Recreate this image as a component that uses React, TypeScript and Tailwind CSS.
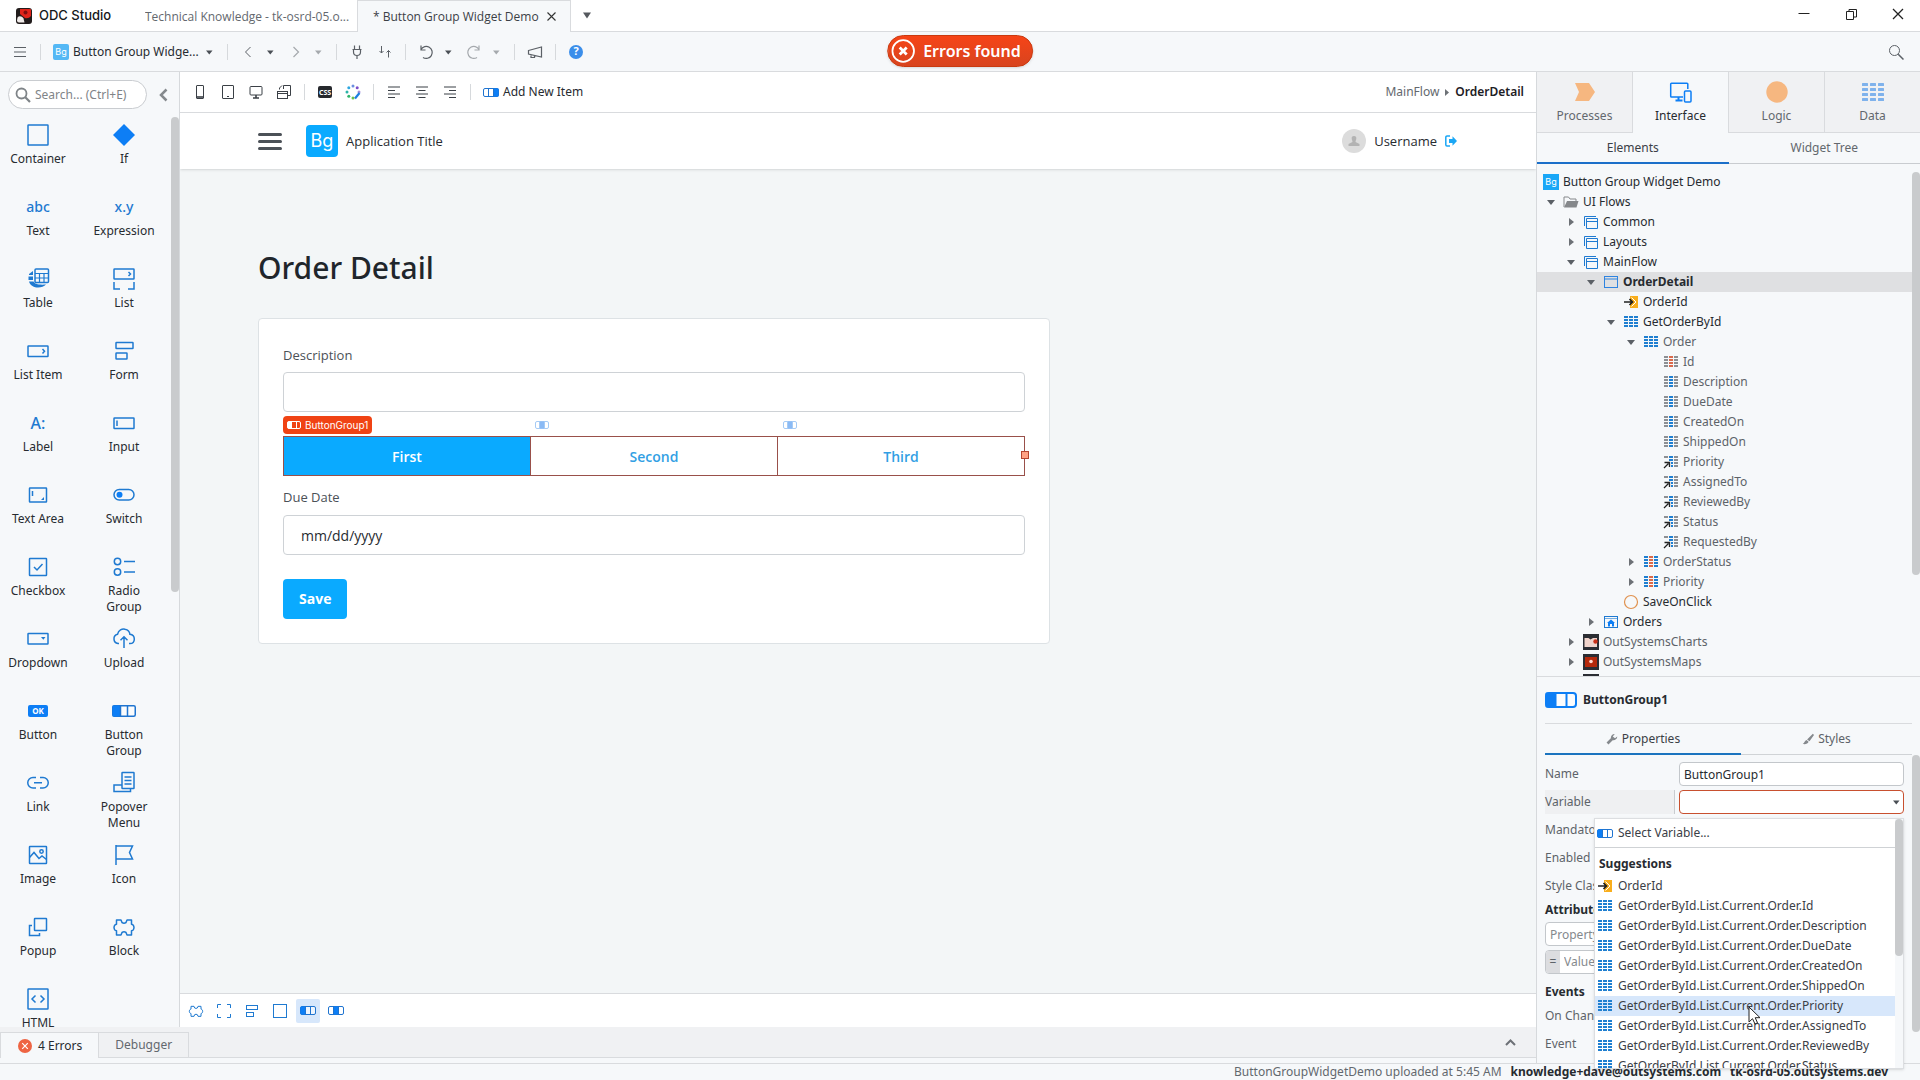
import React from "react";

const BLUE = "#1f7ad1";
const SOLID = "#0d7ef5";

function Svg({ size = 16, children, ...rest }: any) {
  return (
    <svg width={size} height={size} viewBox={`0 0 ${size} ${size}`} fill="none" stroke="currentColor" aria-hidden="true" className="shrink-0" {...rest}>
      {children}
    </svg>
  );
}

function Caret({ dim = false }: { dim?: boolean }) {
  return (
    <svg width="12" height="8" viewBox="0 0 12 8" aria-hidden="true" className={dim ? "text-[#a5a9ad]" : "text-[#4a4f55]"}>
      <path d="M3 2.500h6.500L6.250 6.500z" fill="currentColor" />
    </svg>
  );
}

function GroupIcon({ w = 16, h = 9, on = 0, outline = "#1f74d0", fill = SOLID }: { w?: number; h?: number; on?: number; outline?: string; fill?: string }) {
  const sw = h > 14 ? 2 : h > 10 ? 1.5 : 1;
  const a = Math.floor(w / 3) + 0.5;
  const b = w - Math.floor(w / 3) - 0.5;
  const edges = [0.5, a, b, w - 0.5];
  return (
    <svg width={w} height={h} viewBox={`0 0 ${w} ${h}`} fill="none" aria-hidden="true" className="shrink-0">
      <rect x={sw / 2} y={sw / 2} width={w - sw} height={h - sw} rx={h > 14 ? 3 : 1.5} fill="#fff" fillOpacity={outline === "#fff" ? 0 : 0.6} stroke={outline} strokeWidth={sw} />
      <rect x={edges[on]} y="0.5" width={edges[on + 1] - edges[on]} height={h - 1} rx={on === 0 ? 1 : 0} fill={fill} />
      <path d={`M${a} 0V${h}M${b} 0V${h}`} stroke={outline} strokeWidth={sw} />
    </svg>
  );
}

function GridIcon({ side = "#1f7fd0", mid = "#1f7fd0", link = false }: { side?: string; mid?: string; link?: boolean }) {
  const rows = [2, 5, 8, 11];
  return (
    <svg width="16" height="16" viewBox="0 0 16 16" aria-hidden="true" className="shrink-0">
      {rows.map((y, i) => (
        <g key={y}>
          {!(link && i > 0) && <rect x="1" y={y} width="4" height="2" fill={side} />}
          <rect x={link && i > 1 ? 8 : 6} y={y} width={link && i > 1 ? 2 : 4} height="2" fill={mid} />
          <rect x="11" y={y} width="4" height="2" fill={side} />
        </g>
      ))}
      {link && <path d="M1 14L5.500 9.500M1.500 8.500h5v4.500" fill="none" stroke="#222" strokeWidth="1.300" />}
    </svg>
  );
}

function EntryIcon() {
  return (
    <svg width="16" height="16" viewBox="0 0 16 16" aria-hidden="true" className="shrink-0">
      <rect x="7" y="2" width="8" height="12" fill="#f9ae1c" />
      <path d="M8.500 3.500L13 8L8.500 12.500" fill="none" stroke="#fff" strokeWidth="1" />
      <path d="M1 8h8M6.500 5L9.500 8L6.500 11" fill="none" stroke="#222" strokeWidth="1.700" />
    </svg>
  );
}

function BlockShape({ size = 24 }: { size?: number }) {
  return (
    <svg width={size} height={size} viewBox="0 0 24 24" fill="none" stroke="currentColor" strokeWidth="1.500" strokeLinejoin="round" aria-hidden="true">
      <path d="M4.500 5H9L10 7.500Q12 8.800 14 7.500L15 5H19.500V9.200C20 9.200 22 9.800 22 12.500S20 15.800 19.500 15.800V20H15L14 17.500Q12 16.200 10 17.500L9 20H4.500V15.800C4 15.800 2 15.200 2 12.500S4 9.200 4.500 9.200Z" />
    </svg>
  );
}

const S = (p: any) => <Svg size={24} strokeWidth="1.5" {...p} />;

const palette: { label: string; icon: React.ReactNode }[] = [
  { label: "Container", icon: <S><rect x="2" y="2" width="20" height="20" rx="0.500" /></S> },
  { label: "If", icon: <S><path d="M12 1L23 12L12 23L1 12Z" fill={SOLID} stroke="none" /></S> },
  { label: "Text", icon: <span className="text-sm font-medium">abc</span> },
  { label: "Expression", icon: <span className="text-sm font-medium">x.y</span> },
  {
    label: "Table",
    icon: (
      <S>
        <rect x="9" y="2" width="13.500" height="13.500" rx="1" />
        <path d="M9 6.500h13.500M9 11h13.500M13.500 6.500v9M18 6.500v9" strokeWidth="1.200" />
        <path d="M3 7l4-3v4H3zM2.500 9.500H7V13H2.500zM3 14.500h4.500C9 17 12 18 20 17.500C16 22 5 22 3 14.500z" fill="currentColor" stroke="none" />
      </S>
    ),
  },
  { label: "List", icon: <S><rect x="2" y="2" width="20" height="10" rx="0.500" /><path d="M16.500 5l2 2l-2 2M2 15v7h6M22 15v7h-6" /></S> },
  { label: "List Item", icon: <S><rect x="2" y="7" width="20" height="10.500" rx="0.500" /><path d="M16.500 10l2 2.200l-2 2.200" /></S> },
  { label: "Form", icon: <S><rect x="4" y="3.500" width="17" height="6" rx="0.500" /><rect x="4" y="14" width="11" height="6" rx="0.500" /></S> },
  { label: "Label", icon: <span className="text-base font-medium">A:</span> },
  { label: "Input", icon: <S><rect x="2" y="7" width="20" height="10.500" rx="0.500" /><path d="M5 9.500v5.500" /></S> },
  { label: "Text Area", icon: <S><rect x="3.500" y="5" width="17" height="14" rx="0.500" /><path d="M6.500 8v5" /><path d="M18 14v3h-3z" fill="currentColor" stroke="none" /></S> },
  { label: "Switch", icon: <S><rect x="2" y="6.500" width="20" height="10.500" rx="5.250" /><circle cx="7.500" cy="11.800" r="3" fill={SOLID} stroke="none" /></S> },
  { label: "Checkbox", icon: <S><rect x="3.500" y="3.500" width="17" height="17" rx="0.500" /><path d="M8 12l3 3l5.500-6" /></S> },
  { label: "Radio Group", icon: <S><circle cx="5.500" cy="6.500" r="3.200" /><circle cx="5.500" cy="17" r="3.200" /><path d="M12 6.500h11M12 17h11" /></S> },
  { label: "Dropdown", icon: <S><rect x="2" y="6.500" width="20" height="10.500" rx="0.500" /><path d="M15 10h4.500l-2.200 2.800z" fill="currentColor" stroke="none" /></S> },
  { label: "Upload", icon: <S><path d="M7 16.500H6A4.700 4.700 0 0 1 5.500 7.300C6.500 3 10 1.500 13 2.200C16 2.800 17.700 5 17.900 7.300C24 8 23.500 16.500 18 16.500H17M12 21V10M8.500 13.200L12 9.700l3.500 3.500" /></S> },
  {
    label: "Button",
    icon: <span className="rounded-xs bg-[#0d7ef5] px-1 text-[8px] leading-3 font-bold text-white">OK</span>,
  },
  { label: "Button Group", icon: <GroupIcon w={24} h={12} /> },
  { label: "Link", icon: <S><path d="M10 6.500H7A5.200 5.200 0 0 0 7 17h3M14 6.500h3A5.200 5.200 0 0 1 17 17h-3M8 11.800h8" /></S> },
  { label: "Popover Menu", icon: <S><rect x="10" y="1.500" width="12" height="16" rx="0.500" /><path d="M12.500 6h7M12.500 9.500h7M12.500 13h7M10 14H2v6.500h16.500v-3" /></S> },
  { label: "Image", icon: <S><rect x="3.500" y="3.500" width="17" height="17" rx="0.500" /><circle cx="15.500" cy="8.500" r="1.700" /><path d="M3.500 14.500L8 9.500l5 6l3-2.500l4.500 3.500" /></S> },
  { label: "Icon", icon: <S><path d="M4 22V2M4 3h16.500l-3 6.500l3 6.500H4" /></S> },
  { label: "Popup", icon: <S><rect x="8.500" y="3.500" width="12" height="12" rx="0.500" /><path d="M6 10.500H3.500V20.500H13.500V18" /></S> },
  { label: "Block", icon: <BlockShape /> },
  { label: "HTML", icon: <S><rect x="2" y="2" width="20" height="20" rx="0.500" /><path d="M9.500 8.500L6 12l3.500 3.500M14.500 8.500L18 12l-3.500 3.500" /></S> },
];

function FlowIcon() {
  return (
    <Svg style={{ color: BLUE }}>
      <path d="M1.500 12V2.500H13" />
      <path d="M3.500 4.500h11v10h-11zM3.500 7.500h11" />
    </Svg>
  );
}
const screenIcon = <Svg style={{ color: "#2f84e0" }}><rect x="1.500" y="2.500" width="13" height="11" /><path d="M1.500 5h13" /></Svg>;
const homeIcon = <Svg style={{ color: BLUE }}><rect x="1.500" y="2.500" width="13" height="11" /><path d="M1.500 4.500h13" strokeWidth="0.600" /><path d="M8 5.500L12 9h-1v3.500H9V10H7v2.500H5V9H4z" fill={SOLID} stroke="none" /></Svg>;
const folderIcon = <Svg><path d="M1 13V3h4.500l1.500 2h6v2" stroke="#85888b" /><path d="M1 13.500L4 7h11.500L13.500 13.500z" fill="#85888b" stroke="none" /></Svg>;
const chartsIcon = <Svg stroke="none"><rect width="16" height="16" fill="#2b2d33" /><path d="M1.500 4h4l2 1.500L10 4h4v9H1.500z" fill="#f0d3cb" /><circle cx="12.500" cy="7.500" r="2.200" fill="#c92f18" /></Svg>;
const mapsIcon = <Svg stroke="none"><rect width="16" height="16" fill="#2b2d33" /><rect x="2" y="3" width="12" height="10" fill="#b5290c" /><circle cx="8" cy="7.500" r="1.800" fill="#ffd9cf" /></Svg>;
const GRAY = "#8c8f93";
const RED = "#d9694b";

type Node = { d: number; t: string; a?: "open" | "shut"; icon: React.ReactNode; soft?: boolean; sel?: boolean };
const attr = (t: string): Node => ({ d: 6, t, icon: <GridIcon side={GRAY} />, soft: true });
const ref = (t: string): Node => ({ d: 6, t, icon: <GridIcon side={GRAY} link />, soft: true });
const tree: Node[] = [
  { d: 1, t: "UI Flows", a: "open", icon: folderIcon },
  { d: 2, t: "Common", a: "shut", icon: <FlowIcon /> },
  { d: 2, t: "Layouts", a: "shut", icon: <FlowIcon /> },
  { d: 2, t: "MainFlow", a: "open", icon: <FlowIcon /> },
  { d: 3, t: "OrderDetail", a: "open", icon: screenIcon, sel: true },
  { d: 4, t: "OrderId", icon: <EntryIcon /> },
  { d: 4, t: "GetOrderById", a: "open", icon: <GridIcon /> },
  { d: 5, t: "Order", a: "open", icon: <GridIcon />, soft: true },
  { d: 6, t: "Id", icon: <GridIcon side={GRAY} mid={RED} />, soft: true },
  attr("Description"),
  attr("DueDate"),
  attr("CreatedOn"),
  attr("ShippedOn"),
  ref("Priority"),
  ref("AssignedTo"),
  ref("ReviewedBy"),
  ref("Status"),
  ref("RequestedBy"),
  { d: 5, t: "OrderStatus", a: "shut", icon: <GridIcon mid={RED} />, soft: true },
  { d: 5, t: "Priority", a: "shut", icon: <GridIcon mid={RED} />, soft: true },
  { d: 4, t: "SaveOnClick", icon: <Svg><circle cx="8" cy="8" r="6.500" stroke="#e0924f" strokeWidth="1.200" /></Svg> },
  { d: 3, t: "Orders", a: "shut", icon: homeIcon },
  { d: 2, t: "OutSystemsCharts", a: "shut", icon: chartsIcon, soft: true },
  { d: 2, t: "OutSystemsMaps", a: "shut", icon: mapsIcon, soft: true },
];

function Sep() {
  return <span className="h-4 w-px bg-[#d6d9dc]" />;
}

function Tool({ label, children, className = "" }: { label: string; children: React.ReactNode; className?: string }) {
  return (
    <button type="button" aria-label={label} className={"flex h-4 w-4 items-center justify-center " + className}>
      {children}
    </button>
  );
}
function CaretButton({ label, dim }: { label: string; dim?: boolean }) {
  return <button type="button" aria-label={label} className="-ml-1 flex h-4 w-3 items-center justify-center"><Caret dim={dim} /></button>;
}

function TitleBar() {
  return (
    <header className="flex h-8 items-stretch border-b border-[#d9dbde] bg-white font-['Open_Sans',sans-serif]">
      <div className="flex items-center gap-[7px] pl-4">
        <svg width="16" height="16" viewBox="0 0 16 16" aria-hidden="true">
          <rect width="16" height="16" rx="3" fill="#221c1c" />
          <path d="M4 1h10a1 1 0 0 1 1 1v6a6 6 0 0 1-6 2L4 6z" fill="#e0241b" />
          <circle cx="9.500" cy="4.500" r="2" fill="#7d0f0f" />
          <path d="M1.500 9.500C3 7.500 6 8 7.500 10.500L8.500 14.500H3a2 2 0 0 1-2-2z" fill="#f1ecea" />
        </svg>
        <span className="w-[106px] font-[Inter] text-[13px] font-medium text-[#15171a]">ODC Studio</span>
      </div>
      <button type="button" className="w-[212px] truncate pt-0.5 text-left text-[#63686e]">Technical Knowledge - tk-osrd-05.o...</button>
      <div className="-mb-px flex items-center gap-2 border-x border-t border-[#d9dbde] bg-[#f6f8fa] pr-3.5 pl-[15px] text-[#3b4046]">
        <button type="button">* Button Group Widget Demo</button>
        <button type="button" aria-label="Close tab">
          <svg width="9" height="9" viewBox="0 0 9 9" stroke="#333" strokeWidth="1.100"><path d="M.5.500l8 8M8.500.500l-8 8" /></svg>
        </button>
      </div>
      <button type="button" aria-label="More tabs" className="px-3">
        <svg width="8" height="7" viewBox="0 0 8 7" fill="#55595e"><path d="M0 .500h8L4 6.500z" /></svg>
      </button>
      <div className="ml-auto flex items-start gap-[35px] pt-2 pr-4 text-[#222]">
        <button type="button" aria-label="Minimize"><Svg size={12}><path d="M.5 5.500h11" /></Svg></button>
        <button type="button" aria-label="Restore"><Svg size={12}><path d="M1.500 3.500h7v8h-7zM4 3.500V1.500h7.500V9H9" /></Svg></button>
        <button type="button" aria-label="Close"><Svg size={12}><path d="M1 1l10 10M11 1L1 11" strokeWidth="1.300" /></Svg></button>
      </div>
    </header>
  );
}

function MainToolbar() {
  return (
    <div className="relative flex h-10 items-center gap-3 border-b border-[#d9dbde] bg-[#f6f8fa] px-3 text-[#5b6066]">
      <Tool label="Menu"><Svg><path d="M2 3.500h12M2 8h12M2 12.500h12" strokeWidth="1.200" /></Svg></Tool>
      <Sep />
      <button type="button" className="flex items-center gap-1 text-[#272b30]">
        <span className="flex h-4 w-4 items-center justify-center rounded-xs bg-[#54b8f5] font-[Inter] text-[9px] text-white">Bg</span>
        <span className="w-[126px] text-left">Button Group Widge...</span>
        <Caret />
      </button>
      <Sep />
      <Tool label="Back"><Svg><path d="M10.500 3L5.500 8l5 5" /></Svg></Tool>
      <CaretButton label="Back history" />
      <Tool label="Forward" className="text-[#a5a9ad]"><Svg><path d="M5.500 3l5 5l-5 5" strokeWidth="1.200" /></Svg></Tool>
      <CaretButton label="Forward history" dim />
      <Sep />
      <Tool label="Connect"><Svg><path d="M5.500 1.500v4M10.500 1.500v4M3.500 5.500h9M4.500 5.500v2.500a3.500 3.500 0 0 0 7 0V5.500M8 11.500v3.500" strokeWidth="1.200" /></Svg></Tool>
      <Tool label="Dependencies"><Svg><path d="M4.500 2v7M2.500 7l2 2l2-2M11.500 13.500v-7M9.500 8.500l2-2l2 2" /></Svg></Tool>
      <Sep />
      <Tool label="Undo"><Svg><path d="M3 5.500A6 6 0 1 1 5 13.500M3 1.500v4.500h4.500" strokeWidth="1.200" /></Svg></Tool>
      <CaretButton label="Undo history" />
      <Tool label="Redo" className="text-[#a5a9ad]"><Svg><path d="M13 5.500A6 6 0 1 0 11 13.500M13 1.500v4.500H8.500" strokeWidth="1.200" /></Svg></Tool>
      <CaretButton label="Redo history" dim />
      <Sep />
      <Tool label="Feedback"><Svg><path d="M1.500 6.500L14.500 3v10L1.500 10zM4 10.500v3h3.500v-2" strokeWidth="1.200" /></Svg></Tool>
      <Sep />
      <Tool label="Help"><span className="flex h-3.5 w-3.5 items-center justify-center rounded-full bg-[#3b8eea] text-[11px] font-bold text-white">?</span></Tool>
      <button type="button" aria-label="Search" className="mr-[3px] ml-auto">
        <Svg size={18}><circle cx="7.500" cy="7.500" r="5" /><path d="M11.200 11.200L16.500 16.500" strokeWidth="1.500" /></Svg>
      </button>
      <button type="button" className="absolute top-[3px] left-1/2 flex h-8 -translate-x-1/2 items-center gap-2 rounded-full border border-[#c93a10] bg-linear-to-b from-[#f64417] to-[#d8441e] pr-[11px] pl-[3px] text-base font-semibold text-white shadow-sm">
        <svg width="24" height="24" viewBox="0 0 24 24" fill="none" stroke="#fff" aria-hidden="true">
          <circle cx="12" cy="12" r="10.800" strokeWidth="1.800" />
          <path d="M8.500 8.500l7 7M15.500 8.500l-7 7" strokeWidth="2.800" />
        </svg>
        Errors found
      </button>
    </div>
  );
}

function Palette() {
  return (
    <aside className="flex w-[180px] shrink-0 flex-col border-r border-[#d6d9dc] bg-[#f6f8fa]">
      <div className="flex items-center gap-3 pt-2 pl-2">
        <label className="flex h-[29px] w-[139px] items-center gap-1 rounded-full border border-[#c9ccd0] bg-white px-1.5 text-[#7f8488]">
          <Svg><circle cx="6.500" cy="6.500" r="5" strokeWidth="1.800" /><path d="M10.300 10.300L15 15" strokeWidth="2.200" /></Svg>
          <input aria-label="Search widgets" placeholder="Search... (Ctrl+E)" className="w-0 flex-1 outline-none placeholder:text-[#7f8488]" />
        </label>
        <button type="button" aria-label="Collapse" className="text-[#85898d]">
          <svg width="9" height="14" viewBox="0 0 9 14" fill="none" stroke="currentColor" strokeWidth="2.500"><path d="M7.500 1.500L2 7l5.500 5.500" /></svg>
        </button>
      </div>
      <div className="mt-2 flex min-h-0 flex-1 overflow-hidden">
        <div className="grid flex-1 auto-rows-[72px] grid-cols-[76px_76px] gap-x-2.5 pt-0.5">
          {palette.map((w) => (
            <button type="button" key={w.label} className="flex flex-col items-center text-[#272b30]">
              <span className="flex h-8 items-center justify-center text-[#1f7ad1]">{w.icon}</span>
              <span className={"leading-4 " + (w.label.length > 10 ? "w-14" : "")}>{w.label}</span>
            </button>
          ))}
        </div>
        <div className="h-[475px] w-2 rounded-t-full rounded-b-full bg-[#c9cbcd]" />
      </div>
    </aside>
  );
}

const themeDots: [number, number, string][] = [
  [8, 2, "#6c8fe0"],
  [12.2, 3.8, "#7e4fc9"],
  [14, 8, "#a58fd8"],
  [3.8, 3.8, "#2fa7e0"],
  [2, 8, "#2bb3a8"],
  [3.8, 12.2, "#2fb36a"],
  [8, 14, "#6cc04a"],
];

function CanvasToolbar() {
  return (
    <div className="flex h-[41px] items-center gap-3 border-b border-[#d9dbde] bg-white px-3 text-[#3b4046]">
      <Tool label="Phone"><Svg><rect x="4.500" y="1.500" width="7" height="13" rx="0.500" /><path d="M4.500 13h7" strokeWidth="1.600" /></Svg></Tool>
      <Tool label="Tablet"><Svg><rect x="2.500" y="1.500" width="11" height="13" rx="0.500" /><path d="M7 12.500h2" /></Svg></Tool>
      <Tool label="Desktop"><Svg><rect x="2" y="2.500" width="12" height="8.500" rx="1" /><path d="M8 11v3M5 14h6" strokeWidth="1.600" /></Svg></Tool>
      <Tool label="All devices"><Svg><rect x="1.500" y="7.500" width="10" height="7" /><path d="M1.500 9.500h10M3.500 5.500V4L6 1.500M7.500 5V1.500h7V11.500H12" /></Svg></Tool>
      <Sep />
      <Tool label="Style sheet"><span className="flex h-3 w-3.5 items-center justify-center rounded-xs bg-[#26292d] text-[7px] leading-none font-bold text-white">CSS</span></Tool>
      <Tool label="Theme">
        <Svg stroke="none">
          {themeDots.map(([x, y, c]) => <circle key={c} cx={x} cy={y} r="1.500" fill={c} />)}
          <path d="M14.500 9L10 14.500" stroke="#1c7fe0" strokeWidth="2.200" />
        </Svg>
      </Tool>
      <Sep />
      <Tool label="Align left"><Svg><path d="M2 3h12M2 6.500h7M2 10h12M2 13.500h7" strokeWidth="1.200" /></Svg></Tool>
      <Tool label="Align center"><Svg><path d="M2 3h12M4.500 6.500h7M2 10h12M4.500 13.500h7" strokeWidth="1.200" /></Svg></Tool>
      <Tool label="Align right"><Svg><path d="M2 3h12M7 6.500h7M2 10h12M7 13.500h7" strokeWidth="1.200" /></Svg></Tool>
      <Sep />
      <button type="button" className="flex items-center gap-1 text-[#272b30]"><GroupIcon on={2} /> Add New Item</button>
      <nav aria-label="Breadcrumb" className="ml-auto flex items-center gap-1.5">
        <a href="#main" className="text-[#63686e]">MainFlow</a>
        <svg width="4" height="7" viewBox="0 0 4 7" fill="#6d7176" aria-hidden="true"><path d="M0 0l4 3.500l-4 3.500z" /></svg>
        <a href="#detail" className="font-semibold text-[#1d2024]">OrderDetail</a>
      </nav>
    </div>
  );
}

function AppHeader() {
  return (
    <div className="flex h-14 items-center bg-white pr-[79px] pl-[78px] text-[13px] text-[#272b30] shadow-sm">
      <button type="button" aria-label="Open menu" className="mr-6 flex w-6 flex-col gap-1">
        <span className="h-[3px] rounded-full bg-[#4b5157]" />
        <span className="h-[3px] rounded-full bg-[#4b5157]" />
        <span className="h-[3px] rounded-full bg-[#4b5157]" />
      </button>
      <span className="mr-2 flex h-8 w-8 items-center justify-center rounded-sm bg-[#0aaaff] font-[Inter] text-lg text-white">Bg</span>
      <span className="pt-0.5">Application Title</span>
      <span className="mr-2 ml-auto flex h-6 w-6 items-center justify-center rounded-full bg-[#dcdcdc]">
        <Svg size={12} stroke="none"><path d="M6 1a2.300 2.300 0 0 1 2.300 2.600c0 1.600-.8 2.200-.8 3.400L11.500 9v2H.5V9l4-2c0-1.200-.8-1.800-.8-3.400A2.300 2.300 0 0 1 6 1z" fill="#b3b3b3" /></Svg>
      </span>
      <span className="mr-2 pt-0.5">Username</span>
      <a href="#logout" aria-label="Log out" className="text-[#1ba7f5]">
        <Svg size={12}><path d="M5 1H2a1.200 1.200 0 0 0-1.200 1.200v7.600A1.200 1.200 0 0 0 2 11h3" strokeWidth="1.500" /><path d="M4 4h3.500V1.200L12 6L7.500 10.800V8H4z" fill="currentColor" stroke="none" /></Svg>
      </a>
    </div>
  );
}

const fieldBox = "block h-10 w-full rounded border border-[#ced2d6] bg-white px-[17px] text-sm outline-none placeholder:text-[#272b30]";

function Segment({ label, active }: { label: string; active?: boolean }) {
  return (
    <button
      type="button"
      className={
        "flex flex-1 items-center justify-center border-y border-r border-[#99504a] pt-0.5 font-semibold first:border-l " +
        (active ? "bg-[#0aaaff] text-white" : "bg-white text-[#329fe4]")
      }
    >
      {label}
    </button>
  );
}

function Canvas() {
  return (
    <main className="min-h-0 flex-1 overflow-hidden bg-[#f3f6f7] font-['Open_Sans',sans-serif]">
      <AppHeader />
      <div className="px-[78px] pt-[75px] text-sm text-[#4b5157]">
        <h1 className="mb-[26px] font-['Noto_Sans',sans-serif] text-3xl leading-[48px] font-medium text-[#1f262c]">Order Detail</h1>
        <form className="max-w-[792px] rounded border border-[#dde2e5] bg-white p-6">
          <label htmlFor="description" className="mb-[5px] block text-[13px] leading-6">Description</label>
          <input id="description" className={fieldBox} />
          <div className="relative mt-6 flex h-10">
            <Segment label="First" active />
            <Segment label="Second" />
            <Segment label="Third" />
            <span className="absolute bottom-full left-0 mb-0.5 flex h-[18px] items-center gap-1 rounded-sm bg-[#f04314] px-1 font-[Inter] text-[10px] text-white">
              <GroupIcon w={14} h={8} outline="#fff" fill="#fff" /> ButtonGroup1
            </span>
            <span className="absolute bottom-full left-1/3 mb-[7px] ml-[5px]"><GroupIcon w={14} h={8} on={1} outline="#a6cbf5" fill="#8abaf5" /></span>
            <span className="absolute bottom-full left-2/3 mb-[7px] ml-[5px]"><GroupIcon w={14} h={8} on={1} outline="#a6cbf5" fill="#8abaf5" /></span>
            <span className="absolute top-[15px] -right-1 h-2 w-2 border border-[#b5452f] bg-[#ffa284]" />
          </div>
          <label htmlFor="due" className="mt-[9px] mb-1.5 block text-[13px] leading-6">Due Date</label>
          <input id="due" placeholder="mm/dd/yyyy" className={fieldBox} />
          <button type="button" className="mt-6 block h-10 rounded bg-[#0aaaff] px-4 font-bold text-white">Save</button>
        </form>
      </div>
    </main>
  );
}

function WidgetPath() {
  const items: [string, React.ReactNode][] = [
    ["Block", <BlockShape size={16} />],
    ["Placeholder", <Svg><path d="M1.500 5V1.500H5M11 1.500h3.500V5M14.500 11v3.500H11M5 14.500H1.500V11" /></Svg>],
    ["Form", <Svg><rect x="2.500" y="2.500" width="11" height="4" /><rect x="2.500" y="9.500" width="7" height="4" /></Svg>],
    ["Container", <Svg><rect x="1.500" y="1.500" width="13" height="13" /></Svg>],
    ["Button Group", <GroupIcon />],
    ["Button Group Item", <GroupIcon on={1} />],
  ];
  return (
    <div className="flex h-[34px] items-center gap-1 border-t border-[#d9dbde] bg-white px-1 text-[#1f7ad1]">
      {items.map(([label, icon], i) => (
        <button type="button" key={label} aria-label={label} className={"flex h-6 w-6 items-center justify-center rounded-xs " + (i === 4 ? "bg-[#d7e7fb]" : "")}>
          {icon}
        </button>
      ))}
    </div>
  );
}

function OutputTabs() {
  return (
    <div className="h-9 border-b-[5px] border-[#f6f8fa] bg-[#f0f1f3]">
      <div className="flex h-[31px] items-stretch border-b border-[#d9dbde] pt-[5px]">
        <button type="button" className="-mb-px flex items-center gap-1.5 border-x border-t border-[#d9dbde] bg-[#f6f8fa] pr-4 pl-[17px] text-[#272b30]">
          <svg width="14" height="14" viewBox="0 0 14 14" aria-hidden="true"><circle cx="7" cy="7" r="7" fill="#ee6443" /><path d="M4.200 4.200l5.600 5.600M9.800 4.200L4.200 9.800" stroke="#fff" strokeWidth="1.200" /></svg>
          4 Errors
        </button>
        <button type="button" className="border-t border-r border-[#d9dbde] px-4 text-[#63686e]">Debugger</button>
        <button type="button" aria-label="Expand" className="ml-auto pr-5 pb-1 text-[#6d7176]">
          <svg width="11" height="7" viewBox="0 0 11 7" fill="none" stroke="currentColor" strokeWidth="2"><path d="M1 6l4.500-4.500L10 6" /></svg>
        </button>
      </div>
    </div>
  );
}

const layers: { label: string; icon: React.ReactNode }[] = [
  { label: "Processes", icon: <S stroke="none"><path d="M2 3h14l6 9l-6 9H2l4-9z" fill="#f6b780" /></S> },
  {
    label: "Interface",
    icon: <S style={{ color: SOLID }}><path d="M14 17H2.500A.800.800 0 0 1 1.700 16.200V4a.800.800 0 0 1 .8-.8h15.500a.800.800 0 0 1 .8.8V9" /><rect x="15.500" y="11" width="6.500" height="11" rx="1" /><path d="M9.500 17v3.500M6.500 20.500h7" strokeWidth="2" /></S>,
  },
  { label: "Logic", icon: <S stroke="none"><circle cx="12" cy="12" r="10.700" fill="#f6b780" /></S> },
  {
    label: "Data",
    icon: <S stroke="none">{[3, 8, 13, 18].map((y) => [1, 9, 17].map((x) => <rect key={x + "-" + y} x={x} y={y} width="6" height="3" rx="0.500" fill="#7fb2ec" />))}</S>,
  },
];

function ElementTree() {
  return (
    <div className="flex h-[512px] shrink-0 overflow-hidden pt-2">
      <ul className="min-w-0 flex-1 text-[#272b30]">
        <li className="flex h-5 items-center gap-1 pl-1.5">
          <span className="flex h-4 w-4 items-center justify-center bg-[#1aa7f7] font-[Inter] text-[9px] text-white">Bg</span>
          Button Group Widget Demo
        </li>
        {tree.map((n, i) => (
          <li
            key={i}
            className={"flex h-5 items-center gap-1 " + (n.sel ? "bg-[#dfe0e2] font-bold " : "") + (n.soft ? "text-[#5d6369]" : "")}
            style={{ paddingLeft: 6 + (n.d - 1) * 20 }}
          >
            <span className="flex h-4 w-4 items-center justify-center">
              {n.a === "open" && <svg width="8" height="5" viewBox="0 0 8 5" fill="#5b6066"><path d="M0 0h8L4 5z" /></svg>}
              {n.a === "shut" && <svg width="5" height="8" viewBox="0 0 5 8" fill="#6d7176"><path d="M0 0l5 4l-5 4z" /></svg>}
            </span>
            {n.icon}
            {n.t}
          </li>
        ))}
        <li className="h-5 pt-0.5 pl-[46px]"><span className="block h-4 w-4 bg-[#2b2d33]" /></li>
      </ul>
      <div className="h-[403px] w-2 rounded-full bg-[#c9cbcd]" />
    </div>
  );
}

const suggestions = ["Id", "Description", "DueDate", "CreatedOn", "ShippedOn", "Priority", "AssignedTo", "ReviewedBy", "Status"];

function VariableMenu() {
  return (
    <div className="absolute top-full right-0 z-10 mt-1 flex h-[251px] w-[310px] overflow-hidden border border-[#dcdee1] bg-[#f6f8fa] shadow-sm">
      <div className="min-w-0 flex-1 bg-white text-[#3b4046]">
        <button type="button" className="flex h-[29px] w-full items-center gap-[5px] border-b border-[#cfd2d5] pl-0.5"><GroupIcon /> Select Variable...</button>
        <h3 className="flex h-7 items-center pt-1 pl-1 font-bold text-[#272b30]">Suggestions</h3>
        <ul role="listbox" aria-label="Suggestions">
          <li role="option" aria-selected="false" className="flex h-5 items-center gap-[5px] pl-0.5"><EntryIcon />OrderId</li>
          {suggestions.map((s) => (
            <li key={s} role="option" aria-selected={s === "Priority"} className={"flex h-5 items-center gap-[5px] pl-0.5 whitespace-nowrap " + (s === "Priority" ? "bg-[#d7e7fb]" : "")}>
              <GridIcon />
              {"GetOrderById.List.Current.Order." + s}
            </li>
          ))}
        </ul>
      </div>
      <div className="h-[137px] w-2 rounded-full bg-[#c9cbcd]" />
      <svg width="13" height="19" viewBox="0 0 13 19" aria-hidden="true" className="absolute top-[187px] left-[153px]">
        <path d="M1 1v15l3.500-3.300L7 18l2.500-1.200L7.200 11.700H12z" fill="#fff" stroke="#222" />
      </svg>
    </div>
  );
}

const rowCls = "flex h-7 items-center text-[#5d6369]";

function PropertyPanel() {
  return (
    <section className="flex min-h-0 flex-1 flex-col border-t border-[#d9dbde] pl-2 text-[#5d6369]">
      <h2 className="mr-2 flex h-[47px] items-center gap-1.5 border-b border-[#d9dbde] font-bold text-[#272b30]">
        <GroupIcon w={32} h={16} outline={SOLID} /> ButtonGroup1
      </h2>
      <div className="mr-2 flex h-[31px] border-b border-[#d0d3d6]">
        <button type="button" className="-mb-px flex w-[196px] items-center justify-center gap-1 border-b-2 border-[#1b74bf] text-[#3b4046]">
          <Svg size={12} viewBox="0 0 16 16"><path d="M2 14L9 7" stroke="#85898d" strokeWidth="3.500" /><path d="M15 4.500l-3 2.500-3-2.500L11.700 1.200A5 5 0 0 0 6.500 7l2.500 2.500A5 5 0 0 0 15 4.500z" fill="#85898d" stroke="none" /></Svg>
          Properties
        </button>
        <button type="button" className="flex flex-1 items-center justify-center gap-1">
          <Svg size={12} viewBox="0 0 16 16" stroke="none"><path d="M14.500 1L16 2.500L10 11L6.800 8.500zM6 9.200L8.800 11.700C8 14.500 5 15.300 1 14.800C3.500 13 3.500 10 6 9.200z" fill="#85898d" /></Svg>
          Styles
        </button>
      </div>
      <div className="flex flex-1">
        <div className="min-w-0 flex-1 pt-[5px] pr-2">
          <div className={rowCls}>
            <label htmlFor="wname" className="w-[134px]">Name</label>
            <input id="wname" defaultValue="ButtonGroup1" className="h-6 w-0 flex-1 rounded-sm border border-[#c3c7cb] bg-white px-1 text-[#272b30] outline-none" />
          </div>
          <div className={rowCls}>
            <label htmlFor="variable" className="mr-1 flex h-6 w-[130px] items-center border-r border-[#c9ccd0] bg-[#eff0f2]">Variable</label>
            <div className="relative flex-1">
              <select id="variable" className="block h-6 w-full appearance-none rounded-sm border border-[#c8502f] bg-white outline-none"><option value=""></option></select>
              <span className="pointer-events-none absolute top-2 right-0.5"><Caret /></span>
              <VariableMenu />
            </div>
          </div>
          <div className={rowCls}>Mandatory</div>
          <div className={rowCls}>Enabled</div>
          <div className={rowCls}>Style Classes</div>
          <h3 className="flex h-5 items-center font-bold text-[#272b30]">Attributes</h3>
          <div className={rowCls}>
            <input aria-label="Property" placeholder="Property" className="h-6 w-[134px] rounded-sm border border-[#c3c7cb] bg-white px-1 outline-none placeholder:text-[#85898d]" />
          </div>
          <div className={rowCls}>
            <div className="flex h-6 w-[134px] overflow-hidden rounded-sm border border-[#c3c7cb] bg-white">
              <span className="flex w-[14px] items-center justify-center bg-[#dcdde0]">=</span>
              <input aria-label="Value" placeholder="Value" className="w-0 flex-1 px-1 outline-none placeholder:text-[#85898d]" />
            </div>
          </div>
          <h3 className="flex h-[27px] items-center pt-1 font-bold text-[#272b30]">Events</h3>
          <div className="flex h-[26px] items-center">On Change</div>
          <div className="flex h-[30px] items-center">Event</div>
        </div>
        <div className="h-[277px] w-2 rounded-full bg-[#c9cbcd]" />
      </div>
    </section>
  );
}

function SidePanel() {
  return (
    <aside className="flex w-96 shrink-0 flex-col border-l border-[#d6d9dc] bg-[#f6f8fa]">
      <div className="flex h-[61px] shrink-0">
        {layers.map((l, i) => (
          <button
            type="button"
            key={l.label}
            className={
              "flex flex-1 flex-col items-center border-r border-[#d9dbde] pt-2 last:border-r-0 " +
              (i === 1 ? "text-[#272b30]" : "border-b bg-[#f0f1f3] text-[#63686e]")
            }
          >
            {l.icon}
            <span className="mt-0.5 leading-5">{l.label}</span>
          </button>
        ))}
      </div>
      <div className="flex h-[31px] shrink-0">
        <button type="button" className="flex-1 border-b-2 border-[#1b6fc9] text-[#3b4046]">Elements</button>
        <button type="button" className="flex-1 border-b border-[#c9ccd0] text-[#63686e]">Widget Tree</button>
      </div>
      <ElementTree />
      <PropertyPanel />
    </aside>
  );
}

export default function App() {
  return (
    <div className="flex h-screen flex-col overflow-hidden bg-[#f6f8fa] font-['Noto_Sans',sans-serif] text-xs">
      <TitleBar />
      <MainToolbar />
      <div className="flex min-h-0 flex-1">
        <div className="flex min-w-0 flex-1 flex-col">
          <div className="flex min-h-0 flex-1">
            <Palette />
            <div className="flex min-w-0 flex-1 flex-col">
              <CanvasToolbar />
              <Canvas />
              <WidgetPath />
            </div>
          </div>
          <OutputTabs />
        </div>
        <SidePanel />
      </div>
      <footer className="flex h-[17px] items-center justify-end gap-[9px] border-t border-[#d9dbde] pr-8 leading-4 text-[#63686e]">
        <span>ButtonGroupWidgetDemo uploaded at 5:45 AM</span>
        <span className="font-bold text-[#272b30]">knowledge+dave@outsystems.com</span>
        <span className="font-bold text-[#272b30]">tk-osrd-05.outsystems.dev</span>
      </footer>
    </div>
  );
}
